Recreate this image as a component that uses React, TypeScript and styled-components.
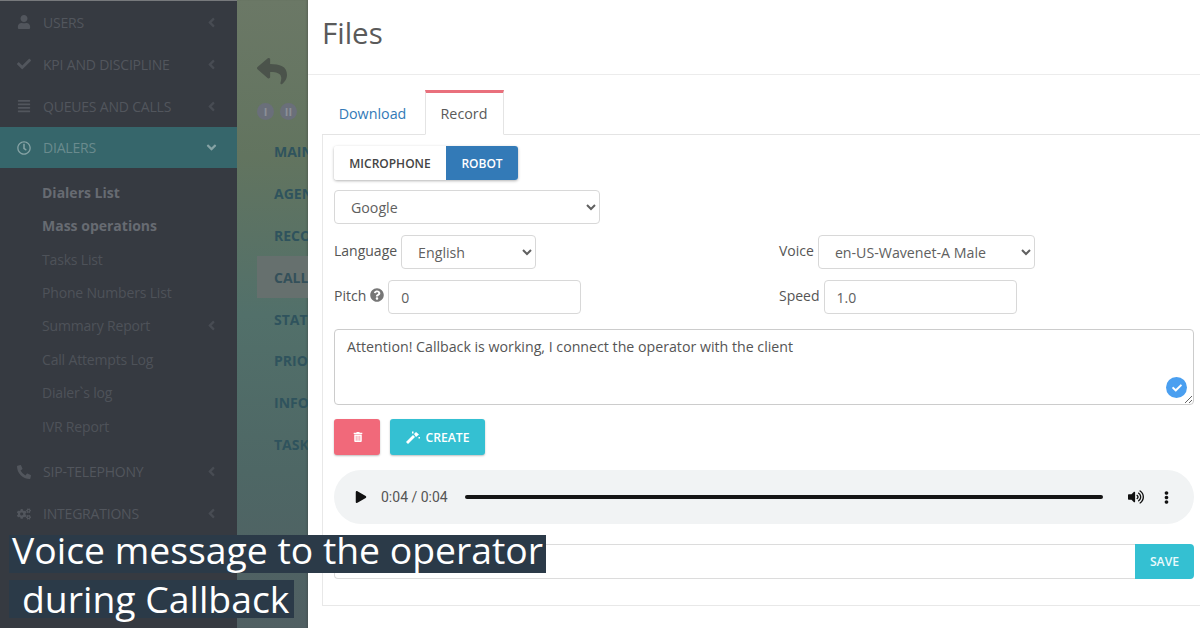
import React from "react";
import styled, { createGlobalStyle } from "styled-components";
import {
  FaUser, FaCheck, FaAlignJustify, FaRegClock, FaPhoneAlt, FaCogs, FaAngleLeft, FaAngleDown,
  FaReply, FaQuestionCircle, FaTrashAlt, FaPlay, FaVolumeUp, FaEllipsisV,
} from "react-icons/fa";

const Global = createGlobalStyle`
  html, body { margin: 0; padding: 0; width: 1200px; height: 628px; overflow: hidden; background: #fff; }
  * { box-sizing: border-box; }
  body { font-family: "Open Sans", "Liberation Sans", sans-serif; }
`;

const Page = styled.div`
  position: relative;
  display: grid;
  grid-template-columns: 237px 71px 892px;
  width: 1200px;
  height: 628px;
  overflow: hidden;
`;

const Sidebar = styled.nav`
  display: flex;
  flex-direction: column;
  background: #363a41;
  border-top: 1px solid #77797c;
  height: 628px;
`;

const MainItem = styled.div<{ $active?: boolean; $h?: number }>`
  display: flex;
  align-items: center;
  height: ${(p) => p.$h ?? 42}px;
  padding: 0 18px 0 16px;
  background: ${(p) => (p.$active ? "#36666b" : "transparent")};
  color: ${(p) => (p.$active ? "#6a8b8e" : "#52565d")};
  font-size: 14px;
  letter-spacing: -0.2px;
`;

const MainIcon = styled.span<{ $light?: boolean }>`
  display: inline-flex;
  justify-content: center;
  width: 16px;
  margin-right: 11px;
  color: ${(p) => (p.$light ? "#86a3a5" : "#52565d")};
  font-size: 14px;
`;

const Grow = styled.span`
  flex: 1;
`;

const Arrow = styled.span<{ $light?: boolean }>`
  display: inline-flex;
  color: ${(p) => (p.$light ? "#86a3a5" : "#484c53")};
  font-size: 15px;
`;

const SubList = styled.div`
  display: flex;
  flex-direction: column;
  padding: 7.6px 0 8px;
`;

const SubItem = styled.div<{ $bold?: boolean }>`
  display: flex;
  align-items: center;
  height: 33.43px;
  padding: 0 18px 0 42px;
  color: ${(p) => (p.$bold ? "#676b72" : "#4e5259")};
  font-size: 14px;
  font-weight: ${(p) => (p.$bold ? 700 : 400)};
  letter-spacing: ${(p) => (p.$bold ? "0" : "-0.17px")};
`;

const Middle = styled.section`
  position: relative;
  display: flex;
  flex-direction: column;
  overflow: hidden;
  padding-top: 56px;
  background: linear-gradient(180deg, #6b7866 0%, #62745f 25%, #52706a 50%, #4e6765 75%, #505f62 100%);
  box-shadow: inset -2px 0 2px -1px rgba(50, 50, 50, 0.3);
`;

const BackIcon = styled.div`
  display: flex;
  margin-left: 20px;
  color: #4b534b;
  font-size: 30px;
  height: 30px;
`;

const Circles = styled.div`
  display: flex;
  gap: 6px;
  margin: 17px 0 0 20px;
`;

const Circle = styled.span`
  display: inline-flex;
  flex: none;
  width: 17px;
  height: 17px;
  border-radius: 50%;
  align-items: center;
  justify-content: center;
  background: #6a6f7a;
  color: #8b8f96;
  font-size: 11px;
  font-weight: 700;
`;

const MidList = styled.div`
  display: flex;
  flex-direction: column;
  margin: 11px 0 0 20px;
  white-space: nowrap;
`;

const MidItem = styled.div<{ $active?: boolean }>`
  display: flex;
  align-items: center;
  height: 41.8px;
  padding-left: 17px;
  background: ${(p) => (p.$active ? "#66706e" : "transparent")};
  color: ${(p) => (p.$active ? "#34505a" : "#2f535d")};
  font-size: 14px;
  font-weight: 700;
`;

const Modal = styled.main`
  display: flex;
  flex-direction: column;
  background: #fff;
  color: #555;
  min-width: 0;
`;

const Header = styled.header`
  display: flex;
  align-items: center;
  height: 75px;
  padding: 0 0 10px 14px;
  border-bottom: 1px solid #ececec;
`;

const Title = styled.h1`
  margin: 0;
  font-size: 29.5px;
  font-weight: 400;
  color: #5a5a5a;
`;

const Body = styled.div`
  padding: 15px 0 0 14px;
`;

const Tabs = styled.div`
  display: flex;
  height: 45px;
  padding-left: 1px;
  border-bottom: 1px solid #e4e4e4;
`;

const Tab = styled.div<{ $active?: boolean }>`
  display: flex;
  align-items: center;
  justify-content: center;
  width: ${(p) => (p.$active ? 79 : 102)}px;
  height: 45px;
  padding-right: ${(p) => (p.$active ? 1 : 3)}px;
  padding-top: ${(p) => (p.$active ? 0 : 1)}px;
  font-size: 14.3px;
  color: ${(p) => (p.$active ? "#5a5a5a" : "#337ab7")};
  ${(p) =>
    p.$active
      ? `background:#fff;border:1px solid #e4e4e4;border-top:3px solid #e9707c;border-bottom:1px solid #fff;`
      : ""}
`;

const Pane = styled.div`
  display: flex;
  flex-direction: column;
  height: 471px;
  padding: 11px 6px 0 11px;
  border-left: 1px solid #e8e8e8;
  border-bottom: 1px solid #e8e8e8;
`;

const Toggle = styled.div`
  display: flex;
  width: 184px;
  height: 34px;
  border-radius: 3px;
  box-shadow: 0 1px 3px rgba(0, 0, 0, 0.3);
`;

const ToggleBtn = styled.div<{ $on?: boolean }>`
  display: flex;
  align-items: center;
  justify-content: center;
  flex: ${(p) => (p.$on ? "0 0 72px" : "1")};
  border-radius: ${(p) => (p.$on ? "0 3px 3px 0" : "3px 0 0 3px")};
  background: ${(p) => (p.$on ? "#337ab7" : "#fff")};
  color: ${(p) => (p.$on ? "#fff" : "#444")};
  font-size: 12px;
  font-weight: 600;
`;

const Select = styled.select<{ $w: number }>`
  width: ${(p) => p.$w}px;
  height: 34px;
  padding: 0 12px;
  background: #fff;
  border: 1px solid #d8d8d8;
  border-radius: 4px;
  color: #606060;
  font-family: inherit;
  font-size: 14.2px;
`;

const EngineSelect = styled(Select)`
  margin-top: 10px;
`;

const FormGrid = styled.div`
  display: grid;
  grid-template-columns: 445px 1fr;
  row-gap: 11px;
  margin-top: 11px;
`;

const Field = styled.div`
  display: flex;
  align-items: center;
  gap: 4px;
  font-size: 14px;
  color: #555;
`;

const FieldText = styled.span`
  position: relative;
  top: -2px;
  display: inline-flex;
  align-items: center;
  gap: 4px;
`;

const Help = styled.span`
  display: inline-flex;
  font-size: 14px;
  color: #777;
`;

const TextInput = styled.input<{ $w: number }>`
  width: ${(p) => p.$w}px;
  height: 34px;
  padding: 0 12px;
  background: #fff;
  border: 1px solid #d8d8d8;
  border-radius: 4px;
  color: #606060;
  font-family: inherit;
  font-size: 14px;
`;

const AreaWrap = styled.div`
  position: relative;
  margin-top: 15px;
  height: 76px;
`;

const Area = styled.textarea`
  display: block;
  width: 100%;
  height: 76px;
  padding: 7px 12px;
  border: 1px solid #ccc;
  border-radius: 4px;
  color: #555;
  font-family: inherit;
  font-size: 14.2px;
  line-height: 20px;
`;

const Badge = styled.span`
  position: absolute;
  right: 7px;
  bottom: 7px;
  display: flex;
  align-items: center;
  justify-content: center;
  width: 21px;
  height: 21px;
  border-radius: 50%;
  background: #4a9ff0;
  color: #fff;
  font-size: 10px;
`;

const Actions = styled.div`
  display: flex;
  gap: 10px;
  margin-top: 14px;
`;

const Btn = styled.div<{ $bg: string; $w: number }>`
  display: flex;
  align-items: center;
  justify-content: center;
  gap: 5px;
  width: ${(p) => p.$w}px;
  height: 36px;
  padding-left: 1px;
  border-radius: 3px;
  background: ${(p) => p.$bg};
  box-shadow: 0 1px 2px rgba(0, 0, 0, 0.25);
  color: #fff;
  font-size: 12.2px;
  font-weight: 600;
`;

const Player = styled.div`
  display: flex;
  align-items: center;
  height: 54px;
  margin-top: 15px;
  padding: 0 21px;
  border-radius: 27px;
  background: #f1f3f4;
  color: #1a1a1a;
`;

const Time = styled.span`
  margin-left: 14px;
  font-family: "Roboto", "Liberation Sans", sans-serif;
  font-size: 14px;
  color: #555;
`;

const Track = styled.div`
  flex: 1;
  height: 4px;
  margin: 0 25px 0 17px;
  border-radius: 2px;
  background: #151515;
`;

const PlayerIcon = styled.span<{ $gap?: number }>`
  display: inline-flex;
  margin-left: ${(p) => p.$gap ?? 0}px;
  font-size: 15px;
  color: #111;
`;

const SaveRow = styled.div`
  display: flex;
  height: 35px;
  margin-top: 20px;
`;

const SaveInput = styled.input`
  flex: 1;
  min-width: 0;
  border: 1px solid #dcdcdc;
  border-right: 0;
  border-radius: 4px 0 0 4px;
  background: #fff;
`;

const SaveBtn = styled.div`
  display: flex;
  align-items: center;
  justify-content: center;
  width: 59px;
  border-radius: 0 4px 4px 0;
  background: #34c0d2;
  color: #eafafc;
  font-size: 12.2px;
  font-weight: 600;
`;

const Caption = styled.div`
  position: absolute;
  left: 9px;
  top: 535px;
  display: flex;
  flex-direction: column;
  align-items: flex-start;
  gap: 7px;
  color: #fff;
  font-size: 37.35px;
  white-space: nowrap;
`;

const CaptionText = styled.span<{ $pl: number; $pr: number; $lh: number }>`
  display: block;
  height: 38px;
  line-height: ${(p) => p.$lh}px;
  padding: 0 ${(p) => p.$pr}px 0 ${(p) => p.$pl}px;
  background: #2b3a48;
`;

const Chevron = () => (
  <Arrow>
    <FaAngleLeft />
  </Arrow>
);

const Wand = () => (
  <svg width="14" height="13" viewBox="0 0 14 13" aria-hidden="true">
    <path d="M2 13 L0 11 L7 4 L9 6 Z" fill="#fff" />
    <path d="M8 3 L10 1 L13 3.5 L10 6 Z" fill="#fff" />
    <path d="M6 0.5 L7.5 0.5 L7.5 2.5 L6 2.5 Z M12.5 6 L14 6 L14 7.5 L12.5 7.5 Z" fill="#fff" />
  </svg>
);

export default function App() {
  return (
    <Page>
      <Global />
      <Sidebar>
        <MainItem><MainIcon><FaUser /></MainIcon>USERS<Grow /><Chevron /></MainItem>
        <MainItem><MainIcon><FaCheck /></MainIcon>KPI AND DISCIPLINE<Grow /><Chevron /></MainItem>
        <MainItem><MainIcon><FaAlignJustify /></MainIcon>QUEUES AND CALLS<Grow /><Chevron /></MainItem>
        <MainItem $active $h={41}>
          <MainIcon $light><FaRegClock /></MainIcon>DIALERS<Grow />
          <Arrow $light><FaAngleDown /></Arrow>
        </MainItem>
        <SubList>
          <SubItem $bold>Dialers List</SubItem>
          <SubItem $bold>Mass operations</SubItem>
          <SubItem>Tasks List</SubItem>
          <SubItem>Phone Numbers List</SubItem>
          <SubItem>Summary Report<Grow /><Chevron /></SubItem>
          <SubItem>Call Attempts Log</SubItem>
          <SubItem>Dialer`s log</SubItem>
          <SubItem>IVR Report</SubItem>
        </SubList>
        <MainItem><MainIcon><FaPhoneAlt /></MainIcon>SIP-TELEPHONY<Grow /><Chevron /></MainItem>
        <MainItem><MainIcon><FaCogs /></MainIcon>INTEGRATIONS<Grow /><Chevron /></MainItem>
      </Sidebar>
      <Middle>
        <BackIcon><FaReply /></BackIcon>
        <Circles>
          <Circle>I</Circle>
          <Circle>II</Circle>
        </Circles>
        <MidList>
          <MidItem>MAIN</MidItem>
          <MidItem>AGENTS</MidItem>
          <MidItem>RECORDS</MidItem>
          <MidItem $active>CALLBACK</MidItem>
          <MidItem>STATUS</MidItem>
          <MidItem>PRIORITY</MidItem>
          <MidItem>INFO</MidItem>
          <MidItem>TASKS</MidItem>
        </MidList>
      </Middle>
      <Modal>
        <Header><Title>Files</Title></Header>
        <Body>
          <Tabs>
            <Tab>Download</Tab>
            <Tab $active>Record</Tab>
          </Tabs>
          <Pane>
            <Toggle>
              <ToggleBtn>MICROPHONE</ToggleBtn>
              <ToggleBtn $on>ROBOT</ToggleBtn>
            </Toggle>
            <EngineSelect $w={266} defaultValue="Google"><option>Google</option></EngineSelect>
            <FormGrid>
              <Field>
                <FieldText>Language</FieldText>
                <Select $w={135} defaultValue="English"><option>English</option></Select>
              </Field>
              <Field>
                <FieldText>Voice</FieldText>
                <Select $w={217} defaultValue="en-US-Wavenet-A Male"><option>en-US-Wavenet-A Male</option></Select>
              </Field>
              <Field>
                <FieldText>Pitch<Help><FaQuestionCircle /></Help></FieldText>
                <TextInput $w={193} defaultValue="0" />
              </Field>
              <Field>
                <FieldText>Speed</FieldText>
                <TextInput $w={193} defaultValue="1.0" />
              </Field>
            </FormGrid>
            <AreaWrap>
              <Area defaultValue="Attention! Callback is working, I connect the operator with the client" />
              <Badge><FaCheck /></Badge>
            </AreaWrap>
            <Actions>
              <Btn $bg="#f1697a" $w={46}><FaTrashAlt size={10} /></Btn>
              <Btn $bg="#34c0d2" $w={95}><Wand />CREATE</Btn>
            </Actions>
            <Player>
              <PlayerIcon><FaPlay size={12} /></PlayerIcon>
              <Time>0:04 / 0:04</Time>
              <Track />
              <PlayerIcon><FaVolumeUp size={16} /></PlayerIcon>
              <PlayerIcon $gap={16}><FaEllipsisV size={13} /></PlayerIcon>
            </Player>
            <SaveRow>
              <SaveInput />
              <SaveBtn>SAVE</SaveBtn>
            </SaveRow>
          </Pane>
        </Body>
      </Modal>
      <Caption>
        <CaptionText $pl={3} $pr={3} $lh={30}>Voice message to the operator</CaptionText>
        <CaptionText $pl={13} $pr={5} $lh={38}>during Callback</CaptionText>
      </Caption>
    </Page>
  );
}
